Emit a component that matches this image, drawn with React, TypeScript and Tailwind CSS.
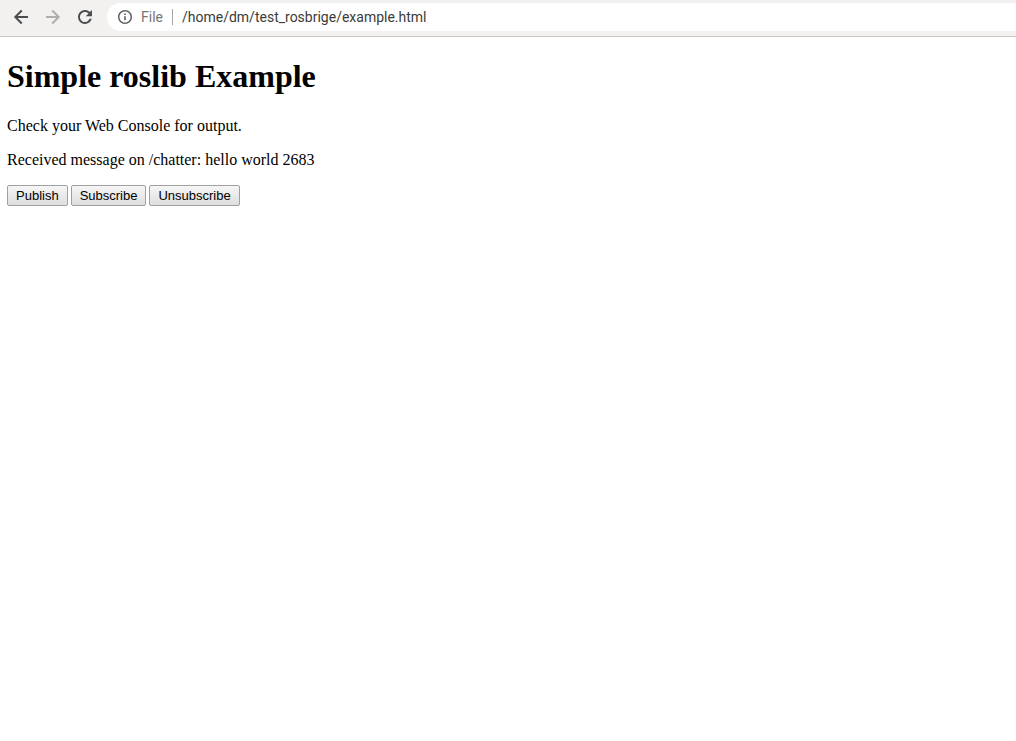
import { useState } from "react";
import type { ReactNode } from "react";

function NavButton({ label, path, disabled }: { label: string; path: string; disabled?: boolean }) {
  return (
    <button
      type="button"
      aria-label={label}
      disabled={disabled}
      className="flex h-7 w-8 items-center justify-center text-[#4a4b4d] disabled:text-[#aeadac]"
    >
      <svg viewBox="0.5 0.5 23 23" className="size-5" fill="currentColor" aria-hidden="true">
        <path d={path} />
      </svg>
    </button>
  );
}

function Toolbar() {
  const [url, setUrl] = useState("/home/dm/test_rosbrige/example.html");
  return (
    <header className="flex items-center border-b border-[#c9c8c7] bg-[#f2f1f0] pt-[3px] pb-[5px] pl-[5px] font-[Roboto,sans-serif]">
      <nav className="flex shrink-0">
        <NavButton label="Back" path="M20 10.8H8.2l5.5-5.5L12 3.7 3.9 12l8.1 8.3 1.7-1.6-5.5-5.5H20z" />
        <NavButton label="Forward" disabled path="M4 10.8h11.8l-5.5-5.5L12 3.7l8.1 8.3-8.1 8.3-1.7-1.6 5.5-5.5H4z" />
        <NavButton
          label="Reload"
          path="M17.65 6.35C16.2 4.9 14.21 4 12 4c-4.42 0-7.99 3.58-7.99 8s3.57 8 7.99 8c3.73 0 6.84-2.55 7.73-6h-2.48c-.82 2.33-3.04 3.8-5.25 3.8-3.2 0-5.8-2.6-5.8-5.8S8.8 6.2 12 6.2c1.66 0 3.04.69 4.12 1.78L12.8 11.2H20V4z"
        />
      </nav>
      <div className="ml-1.5 flex h-7 min-w-0 flex-1 items-center rounded-l-full bg-white pl-[10px] text-[14px]">
        <svg viewBox="0 0 24 24" className="size-4 shrink-0" fill="#5f6062" aria-hidden="true">
          <path d="M10.8 16.8h2.4V10.8h-2.4zM12 1.5C6.2 1.5 1.5 6.2 1.5 12S6.2 22.5 12 22.5 22.5 17.8 22.5 12 17.8 1.5 12 1.5zm0 18.8c-4.6 0-8.3-3.7-8.3-8.3S7.4 3.7 12 3.7s8.3 3.7 8.3 8.3-3.7 8.3-8.3 8.3zM10.8 9h2.4V6.7h-2.4z" />
        </svg>
        <span className="ml-2 w-6 text-[#777573]">File</span>
        <span className="ml-[7px] h-4 w-px bg-[#a5a5a5]" />
        <input
          type="text"
          aria-label="Address"
          value={url}
          onChange={(e) => setUrl(e.target.value)}
          className="ml-[9px] min-w-0 flex-1 bg-transparent text-[#3c3b37] outline-none"
        />
      </div>
    </header>
  );
}

function FormButton({ children }: { children: ReactNode }) {
  return (
    <button
      type="button"
      className="h-[21px] rounded-[2px] border border-[#a0a0a0] bg-linear-to-b from-[#f6f6f6] to-[#dedede] px-2 font-['Liberation_Sans',sans-serif] text-[13px] leading-[15px] text-black"
    >
      {children}
    </button>
  );
}

export default function App() {
  return (
    <div className="min-h-screen bg-white text-black">
      <Toolbar />
      <main className="px-[7px] pt-[21px] font-['Liberation_Serif',serif] text-[16px] leading-[18px]">
        <h1 className="text-[32px] leading-[37px] font-bold">Simple roslib Example</h1>
        <p className="mt-[22px]">Check your Web Console for output.</p>
        <p className="mt-4">Received message on /chatter: hello world 2683</p>
        <div className="mt-4 flex gap-[3px]">
          <FormButton>Publish</FormButton>
          <FormButton>Subscribe</FormButton>
          <FormButton>Unsubscribe</FormButton>
        </div>
      </main>
    </div>
  );
}
